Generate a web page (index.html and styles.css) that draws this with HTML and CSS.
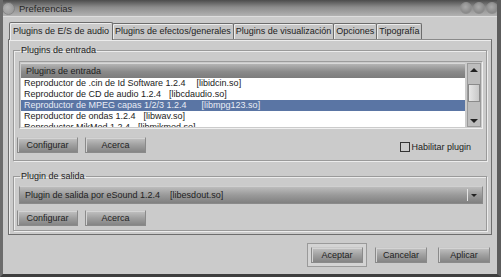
FILE: index.html
```html
<!DOCTYPE html>
<html lang="es">
<head>
<meta charset="utf-8">
<title>Preferencias</title>
<link rel="stylesheet" href="styles.css">
</head>
<body>
<div class="window">
  <div class="titlebar">
    <span class="ticon"></span>
    <span class="title">Preferencias</span>
    <span class="tbtns"><span class="tb"></span><span class="tb"></span><span class="tb"></span></span>
  </div>
  <div class="content">
    <div class="tabs">
      <div class="tab active">Plugins de E/S de audio</div>
      <div class="tab">Plugins de efectos/generales</div>
      <div class="tab">Plugins de visualización</div>
      <div class="tab">Opciones</div>
      <div class="tab">Tipografía</div>
    </div>
    <div class="panel">
      <fieldset class="frame frame-in">
        <legend>Plugins de entrada</legend>
        <div class="listbox">
          <div class="list">
            <div class="lhead">Plugins de entrada</div>
            <div class="row"><span class="name">Reproductor de .cin de Id Software 1.2.4</span><span class="lib g12">[libidcin.so]</span></div>
            <div class="row"><span class="name">Reproductor de CD de audio 1.2.4</span><span class="lib g8">[libcdaudio.so]</span></div>
            <div class="row sel"><span class="name">Reproductor de MPEG capas 1/2/3 1.2.4</span><span class="lib g14">[libmpg123.so]</span></div>
            <div class="row"><span class="name">Reproductor de ondas 1.2.4</span><span class="lib g8">[libwav.so]</span></div>
            <div class="row"><span class="name">Reproductor MikMod 1.2.4</span><span class="lib g8">[libmikmod.so]</span></div>
          </div>
          <div class="vscroll">
            <span class="arr up"></span>
            <span class="thumb"></span>
            <span class="arr down"></span>
          </div>
        </div>
        <div class="actions">
          <button class="btn">Configurar</button>
          <button class="btn">Acerca</button>
          <label class="check"><span class="cbox"></span>Habilitar plugin</label>
        </div>
      </fieldset>
      <fieldset class="frame frame-out">
        <legend>Plugin de salida</legend>
        <div class="combo"><span>Plugin de salida por eSound 1.2.4</span><span class="lib">[libesdout.so]</span><span class="cdrop"></span></div>
        <div class="actions">
          <button class="btn">Configurar</button>
          <button class="btn">Acerca</button>
        </div>
      </fieldset>
    </div>
    <div class="footer">
      <span class="focus"><button class="btn wide">Aceptar</button></span>
      <button class="btn wide">Cancelar</button>
      <button class="btn wide">Aplicar</button>
    </div>
  </div>
</div>
</body>
</html>
```
FILE: styles.css
```css
html, body { margin: 0; padding: 0; }
body {
  background: #3a3a3a;
  font-family: "Liberation Sans", Arial, sans-serif;
  font-size: 9px;
  color: #222;
}
.window {
  width: 501px;
  height: 277px;
  box-sizing: border-box;
  background: #cbcbcb;
  border-left: 3px solid #6c6c6c;
  border-right: 4px solid #5c5c5c;
  border-bottom: 3px solid #3e3e3e;
  display: flex;
  flex-direction: column;
  overflow: hidden;
}
.titlebar {
  height: 16px;
  flex: none;
  display: flex;
  align-items: center;
  background: linear-gradient(#4c4c4c, #8c8c8c 45%, #b2b2b2);
  border-bottom: 1px solid #dedede;
  margin-left: -3px;
  margin-right: -4px;
  padding: 0 3px 0 2px;
}
.ticon {
  width: 11px; height: 11px; border-radius: 50%;
  background: radial-gradient(circle at 40% 35%, #c8c8c8, #8a8a8a);
  border: 1px solid #7a7a7a;
  opacity: .7;
}
.title { margin-left: 4px; font-size: 9.5px; color: #262626; }
.tbtns { margin-left: auto; display: flex; gap: 1px; }
.tb {
  width: 10px; height: 10px; border-radius: 50%;
  background: radial-gradient(circle at 45% 40%, #a9a9a9, #7d7d7d);
  border: 1px solid #8e8e8e;
}
.content {
  flex: 1;
  display: flex;
  flex-direction: column;
  padding: 5px 5px 0 5px;
}
.tabs {
  display: flex;
  height: 17px;
  align-items: flex-end;
  padding-left: 1px;
  position: relative;
  z-index: 1;
}
.tab {
  height: 15px;
  line-height: 15px;
  padding: 0 2px;
  background: #c6c6c6;
  border: 1px solid #6c6c6c;
  border-bottom: none;
  border-radius: 2px 2px 0 0;
  box-shadow: inset 1px 1px 0 #ececec;
  white-space: nowrap;
}
.tab + .tab { margin-left: -1px; }
.tab.active {
  height: 16px;
  line-height: 16px;
  padding: 0 3px 1px 3px;
  background: #cbcbcb;
  margin-bottom: -1px;
}
.panel {
  height: 196px;
  box-sizing: border-box;
  border: 1px solid #6e6e6e;
  border-top-color: #8a8a8a;
  box-shadow: inset 1px 1px 0 #ececec;
  padding: 5px 4px 0 4px;
  display: flex;
  flex-direction: column;
}
.frame {
  margin: 0;
  padding: 0 3px 6px 5px;
  border: 1px solid #9a9a9a;
  box-shadow: 1px 1px 0 #ececec, inset 1px 1px 0 #ececec;
  min-width: 0;
}
.frame legend {
  padding: 0 1px;
  margin-left: 1px;
  line-height: 10px;
}
.frame-in { height: 116px; box-sizing: border-box; flex: none; }
.frame-out { margin-top: 10px; padding-bottom: 4px; flex: none; }
.listbox {
  margin-top: 6px;
  display: flex;
  height: 64px;
  border: 1px solid #9c9c9c;
  border-right-color: #f0f0f0;
  border-bottom-color: #f0f0f0;
  padding: 1px;
}
.list {
  flex: 1;
  background: #fff;
  overflow: hidden;
}
.lhead {
  height: 14px;
  line-height: 14px;
  padding-left: 5px;
  background: linear-gradient(#b4b4b4, #8a8a8a 55%, #7c7c7c);
  border-top: 1px solid #d8d8d8;
  color: #222;
}
.row {
  height: 11px;
  line-height: 11px;
  padding-left: 3px;
  white-space: nowrap;
  display: flex;
}
.row .lib.g8 { margin-left: 8px; }
.row .lib.g12 { margin-left: 11px; }
.row .lib.g14 { margin-left: 15px; }
.row.sel { background: #5a75a4; color: #e8ecf4; }
.vscroll {
  width: 14px;
  margin-left: 2px;
  background: #bdbdbd;
  border: 1px solid #9a9a9a;
  box-sizing: border-box;
  display: flex;
  flex-direction: column;
  align-items: center;
  padding: 2px 0;
}
.arr { width: 0; height: 0; border-left: 4px solid transparent; border-right: 4px solid transparent; }
.arr.up { border-bottom: 4px solid #222; margin-top: 2px; }
.arr.down { border-top: 4px solid #222; margin-top: auto; margin-bottom: 1px; }
.thumb {
  margin-top: 12px;
  width: 10px; height: 16px;
  background: linear-gradient(90deg, #e6e6e6, #c8c8c8);
  border: 1px solid #8a8a8a;
}
.actions {
  display: flex;
  align-items: center;
  gap: 7px;
  margin-top: 8px;
  margin-left: -2px;
}
.btn {
  font: inherit;
  color: #222;
  width: 61px;
  height: 16px;
  padding: 0;
  border: 1px solid #8a8a8a;
  border-top-color: #c8c8c8;
  background: linear-gradient(#c2c2c2, #a0a0a0 50%, #848484);
  box-shadow: inset 1px 1px 0 #d4d4d4;
}
.check {
  margin-left: auto;
  margin-right: 12px;
  display: flex;
  align-items: center;
  margin-top: 3px;
}
.cbox {
  width: 8px; height: 8px;
  border: 1px solid #333;
  background: #bdbdbd linear-gradient(45deg, transparent 42%, #222 42%, #222 58%, transparent 58%),
              linear-gradient(-45deg, transparent 42%, #222 42%, #222 58%, transparent 58%);
  margin-right: 1px;
}
.combo {
  margin-top: 5px;
  height: 16px;
  display: flex;
  align-items: center;
  padding-left: 5px;
  background: linear-gradient(#bcbcbc, #9a9a9a 50%, #808080);
  border: 1px solid #8a8a8a;
  border-top-color: #d0d0d0;
}
.combo .lib { margin-left: 10px; }
.cdrop {
  margin-left: auto;
  width: 12px; height: 12px;
  border-left: 1px solid #e4e4e4;
  margin-right: 2px;
  position: relative;
}
.cdrop::after {
  content: "";
  position: absolute; left: 3px; top: 5px;
  border-left: 3px solid transparent; border-right: 3px solid transparent; border-top: 3px solid #222;
}
.frame-out .actions { margin-top: 6px; }
.footer {
  flex: 1;
  display: flex;
  align-items: center;
  justify-content: flex-end;
  gap: 11px;
  padding-right: 2px;
}
.btn.wide { width: 52px; }
.focus {
  padding: 3px;
  border: 1px solid #9a9a9a;
  background: #d4d4d4;
  display: flex;
  margin-right: -3px;
}
.row .lib, .combo .lib { white-space: nowrap; }
```
